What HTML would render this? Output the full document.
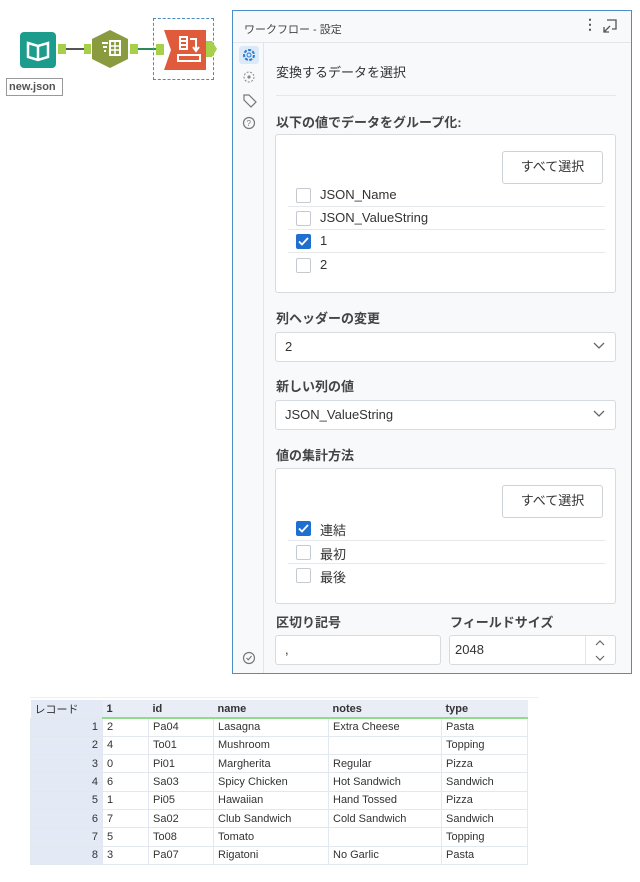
<!DOCTYPE html>
<html><head><meta charset="utf-8"><style>
*{box-sizing:border-box;margin:0;padding:0}
body{width:640px;height:882px;background:#fff;position:relative;font-family:"Liberation Sans","Noto Sans CJK JP",sans-serif;color:#333;overflow:hidden}
.a{position:absolute}
.panel{left:232px;top:10px;width:400px;height:664px;border:1px solid #4d8cc4;background:#f7f9fb}
.t{font-size:13px;color:#333;white-space:nowrap}
.b{font-weight:bold;color:#444}
.box{background:#fff;border:1px solid #d6dbe0;border-radius:3px}
.btn{background:#fff;border:1px solid #ccd2d8;border-radius:3px;font-size:13px;text-align:center;line-height:30px}
.cb{width:15px;height:15px;border:1px solid #c4cad0;border-radius:2px;background:#fff}
.cb.on{background:#1f6fd0;border-color:#1f6fd0}
.sep{height:1px;background:#e6e9ec}
table{border-collapse:collapse;font-size:11px;font-family:"Liberation Sans","Noto Sans CJK JP",sans-serif}
td{height:18.3px;border:1px solid #e3e8f0;padding:0 4px;color:#333;white-space:nowrap}
th{height:18px;text-align:left;padding:0 4px;background:#e8edf6;border-bottom:2px solid #8fdc8a;font-size:11px}
td.r{background:#e3e9f5;text-align:right}
</style></head><body>
<!-- canvas -->
<div class="a" style="left:20px;top:32px;width:36px;height:36px;background:#1c9c8c;border-radius:4px"></div>
<svg class="a" style="left:20px;top:32px" width="36" height="36"><path d="M8 11 L18 14 L28 11 L28 25 L18 28 L8 25Z M18 14 V28" fill="none" stroke="#fff" stroke-width="2.5"/></svg>
<div class="a" style="left:6px;top:78px;width:57px;height:18px;border:1px solid #999;font-size:11px;font-weight:bold;color:#555;line-height:16px;padding-left:2px">new.json</div>
<div class="a" style="left:58px;top:44px;width:8px;height:10px;background:#a6cf4a"></div>
<div class="a" style="left:66px;top:48px;width:18px;height:2px;background:#555"></div>
<div class="a" style="left:84px;top:44px;width:7px;height:10px;background:#a6cf4a"></div>
<svg class="a" style="left:91px;top:29px" width="38" height="40"><polygon points="19,1 37,10 37,30 19,39 1,30 1,10" fill="#8a9b3f"/><rect x="11" y="13" width="6" height="2" fill="#fff"/><rect x="12" y="17" width="4" height="2" fill="#fff"/><rect x="13" y="21" width="2" height="2" fill="#fff"/><rect x="19" y="12" width="10" height="14" fill="none" stroke="#fff" stroke-width="2"/><path d="M19 17H29M19 21H29M24 12V26" stroke="#fff" stroke-width="1.5"/></svg>
<div class="a" style="left:130px;top:44px;width:8px;height:10px;background:#a6cf4a"></div>
<div class="a" style="left:138px;top:48px;width:20px;height:2px;background:#2a8a5a"></div>
<div class="a" style="left:153px;top:18px;width:61px;height:62px;border:1px dashed #4b8bc0"></div>
<div class="a" style="left:156px;top:44px;width:8px;height:11px;background:#a6cf4a"></div>
<svg class="a" style="left:164px;top:30px" width="42" height="40"><path d="M0 0H42V40H0L7 20Z" fill="#e05a3c"/><rect x="16" y="7" width="7" height="12" fill="none" stroke="#fff" stroke-width="2"/><path d="M16 11H23M16 15H23M26 9H32V20M29 17L32 21L35 17" fill="none" stroke="#fff" stroke-width="2"/><rect x="14" y="25" width="22" height="6" fill="none" stroke="#fff" stroke-width="2"/></svg>
<svg class="a" style="left:206px;top:41px" width="11" height="16"><path d="M0 0H6L11 8L6 16H0Z" fill="#a6cf4a"/></svg>

<!-- panel -->
<div class="a panel">
 <div class="a" style="left:0;top:0;width:398px;height:32px;border-bottom:1px solid #e2e6ea;background:#f7f9fb"></div>
 <div class="a t" style="left:11px;top:10px;font-size:11px;color:#444">ワークフロー - 設定</div>
 <div class="a" style="left:350px;top:5px;font-size:14px;color:#555;font-weight:bold">⋮</div>
 <svg class="a" style="left:370px;top:8px" width="14" height="14"><path d="M4 1H13V10H9M1 13L7 7M1 8V13H6" fill="none" stroke="#555" stroke-width="1.3"/></svg>
 <div class="a" style="left:30px;top:32px;width:1px;height:630px;background:#e2e6ea"></div>
 <div class="a" style="left:6px;top:35px;width:20px;height:18px;background:#dbe9f8;border-radius:3px"></div>
 <svg class="a" style="left:8px;top:36px" width="16" height="100"><circle cx="8" cy="8" r="5" fill="none" stroke="#2a7ad0" stroke-width="2" stroke-dasharray="3 1.5"/><circle cx="8" cy="8" r="2" fill="none" stroke="#2a7ad0"/><circle cx="8" cy="30" r="5" fill="none" stroke="#888" stroke-dasharray="2 1.5"/><circle cx="8" cy="30" r="1.6" fill="#888"/><path d="M3 48V53L10 60L15 55L8 48Z" fill="none" stroke="#777" stroke-width="1.2"/><circle cx="8" cy="76" r="5.5" fill="none" stroke="#777" stroke-width="1.2"/><text x="5.5" y="79" font-size="8" fill="#777">?</text></svg>
 <svg class="a" style="left:9px;top:640px" width="14" height="14"><circle cx="7" cy="7" r="5.5" fill="none" stroke="#777" stroke-width="1.2"/><path d="M4.5 7L6.3 8.8L9.5 5" fill="none" stroke="#777" stroke-width="1.2"/></svg>

 <div class="a t" style="left:43px;top:51px;font-size:13px">変換するデータを選択</div>
 <div class="a sep" style="left:43px;top:84px;width:340px"></div>
 <div class="a t b" style="left:43px;top:101px">以下の値でデータをグループ化:</div>
 <div class="a box" style="left:42px;top:123px;width:341px;height:159px"></div>
 <div class="a btn" style="left:269px;top:140px;width:101px;height:33px">すべて選択</div>
 <div class="a cb" style="left:63px;top:177px"></div><div class="a t" style="left:87px;top:176px">JSON_Name</div>
 <div class="a sep" style="left:55px;top:195px;width:317px"></div>
 <div class="a cb" style="left:63px;top:200px"></div><div class="a t" style="left:87px;top:199px">JSON_ValueString</div>
 <div class="a sep" style="left:55px;top:218px;width:317px"></div>
 <div class="a cb on" style="left:63px;top:223px"></div><svg class="a" style="left:63px;top:223px" width="15" height="15"><path d="M3 7.5L6 10.5L12 4" fill="none" stroke="#fff" stroke-width="1.8"/></svg><div class="a t" style="left:87px;top:222px">1</div>
 <div class="a sep" style="left:55px;top:241px;width:317px"></div>
 <div class="a cb" style="left:63px;top:247px"></div><div class="a t" style="left:87px;top:246px">2</div>

 <div class="a t b" style="left:43px;top:297px">列ヘッダーの変更</div>
 <div class="a box" style="left:42px;top:321px;width:341px;height:30px"></div>
 <div class="a t" style="left:52px;top:328px">2</div>
 <svg class="a" style="left:360px;top:331px" width="12" height="8"><path d="M1 1L6 6L11 1" fill="none" stroke="#666" stroke-width="1.3"/></svg>
 <div class="a t b" style="left:43px;top:365px">新しい列の値</div>
 <div class="a box" style="left:42px;top:389px;width:341px;height:30px"></div>
 <div class="a t" style="left:52px;top:396px">JSON_ValueString</div>
 <svg class="a" style="left:360px;top:399px" width="12" height="8"><path d="M1 1L6 6L11 1" fill="none" stroke="#666" stroke-width="1.3"/></svg>
 <div class="a t b" style="left:43px;top:434px">値の集計方法</div>
 <div class="a box" style="left:42px;top:457px;width:341px;height:136px"></div>
 <div class="a btn" style="left:269px;top:474px;width:101px;height:33px">すべて選択</div>
 <div class="a cb on" style="left:63px;top:510px"></div><svg class="a" style="left:63px;top:510px" width="15" height="15"><path d="M3 7.5L6 10.5L12 4" fill="none" stroke="#fff" stroke-width="1.8"/></svg><div class="a t" style="left:87px;top:509px">連結</div>
 <div class="a sep" style="left:55px;top:529px;width:317px"></div>
 <div class="a cb" style="left:63px;top:534px"></div><div class="a t" style="left:87px;top:533px">最初</div>
 <div class="a sep" style="left:55px;top:552px;width:317px"></div>
 <div class="a cb" style="left:63px;top:557px"></div><div class="a t" style="left:87px;top:556px">最後</div>

 <div class="a t b" style="left:43px;top:601px">区切り記号</div>
 <div class="a t b" style="left:217px;top:601px">フィールドサイズ</div>
 <div class="a box" style="left:42px;top:624px;width:166px;height:30px"></div>
 <div class="a t" style="left:52px;top:631px">,</div>
 <div class="a box" style="left:216px;top:624px;width:167px;height:30px"></div>
 <div class="a" style="left:352px;top:625px;width:1px;height:28px;background:#e2e6ea"></div>
 <div class="a t" style="left:222px;top:631px">2048</div>
 <svg class="a" style="left:361px;top:628px" width="12" height="24"><path d="M2 6L6 2L10 6M2 17L6 21L10 17" fill="none" stroke="#666" stroke-width="1.2"/></svg>
</div>

<!-- table -->
<div class="a" style="left:30px;top:697px;width:508px;height:1px;background:#eee"></div>
<table class="a" style="left:30px;top:700px;width:498px">
<tr><th style="width:72px;background:#e3e9f5;border-bottom:none;font-weight:normal">レコード</th><th style="width:46px">1</th><th style="width:65px">id</th><th style="width:115px">name</th><th style="width:113px">notes</th><th>type</th></tr>
<tr><td class="r">1</td><td>2</td><td>Pa04</td><td>Lasagna</td><td>Extra Cheese</td><td>Pasta</td></tr>
<tr><td class="r">2</td><td>4</td><td>To01</td><td>Mushroom</td><td></td><td>Topping</td></tr>
<tr><td class="r">3</td><td>0</td><td>Pi01</td><td>Margherita</td><td>Regular</td><td>Pizza</td></tr>
<tr><td class="r">4</td><td>6</td><td>Sa03</td><td>Spicy Chicken</td><td>Hot Sandwich</td><td>Sandwich</td></tr>
<tr><td class="r">5</td><td>1</td><td>Pi05</td><td>Hawaiian</td><td>Hand Tossed</td><td>Pizza</td></tr>
<tr><td class="r">6</td><td>7</td><td>Sa02</td><td>Club Sandwich</td><td>Cold Sandwich</td><td>Sandwich</td></tr>
<tr><td class="r">7</td><td>5</td><td>To08</td><td>Tomato</td><td></td><td>Topping</td></tr>
<tr><td class="r">8</td><td>3</td><td>Pa07</td><td>Rigatoni</td><td>No Garlic</td><td>Pasta</td></tr>
</table>
</body></html>
